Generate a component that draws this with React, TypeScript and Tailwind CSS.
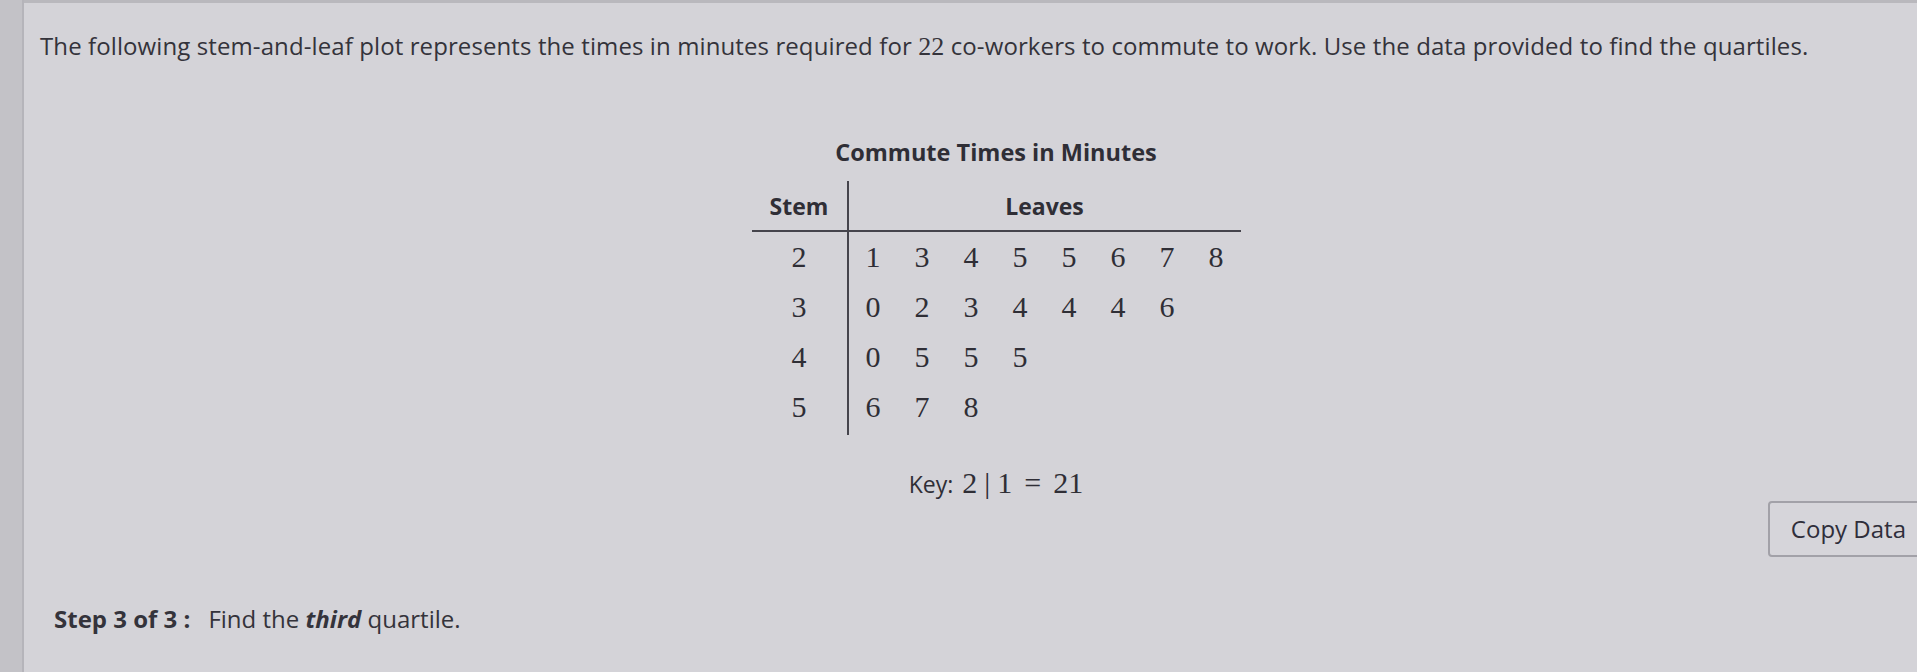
import React from "react"

const rows: { stem: number; leaves: number[] }[] = [
  { stem: 2, leaves: [1, 3, 4, 5, 5, 6, 7, 8] },
  { stem: 3, leaves: [0, 2, 3, 4, 4, 4, 6] },
  { stem: 4, leaves: [0, 5, 5, 5] },
  { stem: 5, leaves: [6, 7, 8] },
]

const sans = "font-['Open_Sans','Liberation_Sans',sans-serif]"
const serif = "font-['Liberation_Serif','Times_New_Roman',serif]"

function StemLeafPlot() {
  return (
    <div className="flex flex-col">
      {/* header */}
      <div className="flex h-[51px]">
        <div className={`w-[97px] border-r-2 border-b-2 border-[#45444c] flex items-end justify-center pb-[10px] text-[23px] leading-[28px] font-bold text-[#2f2e36] ${sans}`}>
          Stem
        </div>
        <div className={`w-[392px] border-b-2 border-[#45444c] flex items-end justify-center pb-[10px] text-[23px] leading-[28px] font-bold text-[#2f2e36] ${sans}`}>
          Leaves
        </div>
      </div>
      {rows.map((r, i) => (
        <div key={r.stem} className="flex h-[50px]">
          <div
            className={`w-[97px] shrink-0 border-r-2 border-[#45444c] flex justify-center text-[30px] leading-none text-[#2f2e36] ${serif} ${
              i === rows.length - 1 ? "h-[53px] items-start pt-[10px]" : "items-center"
            }`}
          >
            {r.stem}
          </div>
          <div className={`w-[392px] grid grid-cols-8 items-center text-[30px] leading-none text-[#2f2e36] ${serif}`}>
            {r.leaves.map((l, j) => (
              <span key={j} className="text-center">{l}</span>
            ))}
          </div>
        </div>
      ))}
    </div>
  )
}

export default function App() {
  return (
    <div className="w-[1917px] h-[672px] overflow-hidden bg-[#c5c4c9] flex">
      {/* left gutter */}
      <div className="w-[24px] shrink-0 bg-[#c3c2c7] border-r-2 border-[#b5b4ba]" />

      <div className="flex-1 flex flex-col border-t-[3px] border-[#b9b8bd] bg-[#d4d3d8] text-[#34333b]">
        <p className={`pl-[16px] pt-[29px] text-[24px] leading-[28px] tracking-[0.1px] ${sans}`}>
          The following stem-and-leaf plot represents the times in minutes required for{" "}
          <span className={`${serif} text-[26px]`}>22</span> co-workers to commute to work. Use the data provided to find the quartiles.
        </p>

        {/* plot block */}
        <div className="ml-[727px] w-[490px] flex flex-col items-center mt-[77px]">
          <div className={`text-[23.5px] leading-[28px] font-bold text-[#2f2e36] ${sans}`}>
            Commute Times in Minutes
          </div>
          <div className="mt-[15px]">
            <StemLeafPlot />
          </div>
          <div className="mt-[28px] flex items-baseline gap-[9px] text-[#2f2e36]">
            <span className={`text-[23px] ${sans}`}>Key:</span>
            <span className={`text-[30px] ${serif}`}>
              2<span className="mx-[7px]">|</span>1<span className="mx-[12px]">=</span>21
            </span>
          </div>
        </div>

        <div className="flex justify-end -mt-[4px] -mr-[12px]">
          <button className={`h-[56px] px-[21px] border-2 border-[#a2a1a8] rounded-[4px] bg-[#d6d5da] text-[24px] text-[#2f2e3a] ${sans}`}>
            Copy Data
          </button>
        </div>

        <div className={`pl-[30px] mt-[44px] text-[24px] text-[#34333b] ${sans}`}>
          <span className="font-bold">Step 3 of 3 :</span>
          <span className="ml-[18px]">Find the </span>
          <span className="font-bold italic">third</span>
          <span> quartile.</span>
        </div>
      </div>
    </div>
  )
}
